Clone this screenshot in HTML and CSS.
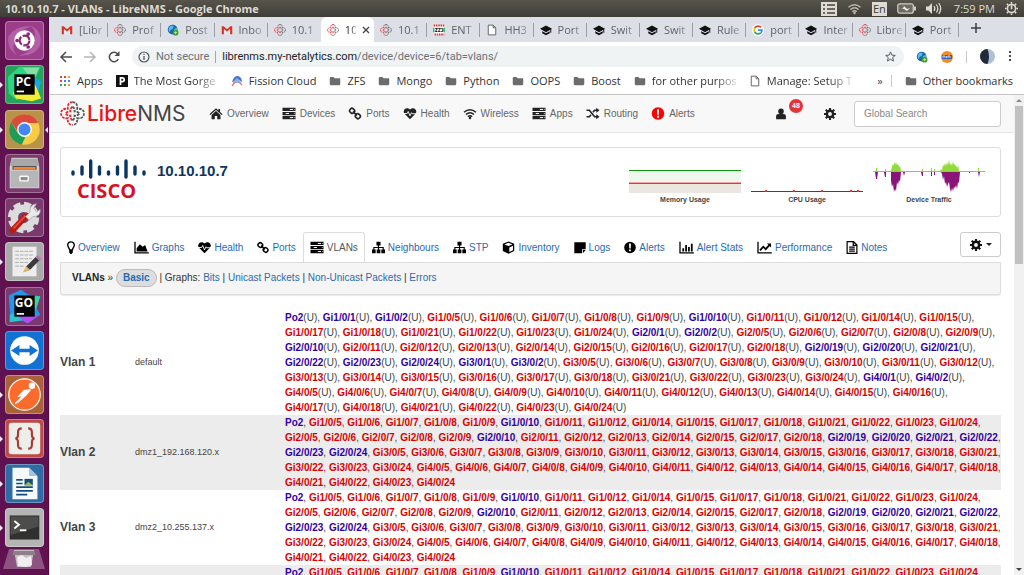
FILE: index.html
```html
<!DOCTYPE html>
<html lang="en">
<head>
<meta charset="utf-8">
<title>10.10.10.7 - VLANs - LibreNMS</title>
<link rel="stylesheet" href="styles.css">
</head>
<body>
<svg class="defs" aria-hidden="true">
  <symbol id="nms" viewBox="0 0 24 24"><g fill="none" stroke-width="1.7" stroke-dasharray="2.6 1">
    <g stroke="#e8252b"><path d="M12 1C9 1 7 3 7.500 7.500C3 7 1 9 1 12S3 17 7.500 16.500C7 21 9 23 12 23"/><path d="M12 5.500C9.500 7 10 10 10 10C7 9.500 5.500 12 5.500 12S7 14.500 10 14C9.500 17 12 18.500 12 18.500"/></g>
    <g class="nms-dark"><path d="M12 1C15 1 17 3 16.500 7.500C21 7 23 9 23 12S21 17 16.500 16.500C17 21 15 23 12 23"/><path d="M12 5.500C14.500 7 14 10 14 10C17 9.500 18.500 12 18.500 12S17 14.500 14 14C14.500 17 12 18.500 12 18.500"/></g></g></symbol>
  <symbol id="gmail" viewBox="0 0 16 16"><path d="M1 3h2.500L8 7l4.500-4H15v10.500h-2.800V6.500L8 10.200 3.800 6.500v7H1z" fill="#d93025"/><path d="M4 6.800l4 3.600 4-3.600v6.700H4z" fill="#eee" opacity=".5"/></symbol>
  <symbol id="globe" viewBox="0 0 16 16"><circle cx="7.500" cy="7.500" r="6.500" fill="#1667ad"/><path d="M3 4l3-2 3 1-1 3-3 2-2 3-1-3zM9 7l4-2 .5 3-3 3z" fill="#5cb8ee"/><circle cx="11.500" cy="11.500" r="3.800" fill="#3da02b"/><path d="M11.500 9.500v4M9.500 11.500h4" stroke="#d6f3b2"/></symbol>
  <symbol id="cap" viewBox="0 0 16 16"><path d="M8 2l8 4.400-1 .6v4.500h-1.300V7.800L8 11 0 6.400z"/><path d="M3 9.500l5 2.800 5-2.800v2.700L8 15l-5-2.800z"/></symbol>
  <symbol id="doc" viewBox="0 0 16 16"><path d="M3 1.500h6.500L13 5v9.500H3zM9.500 1.500V5H13" fill="#fff" stroke="#5f6368" stroke-width="1.300"/></symbol>
  <symbol id="folder" viewBox="0 0 16 16"><path d="M1 4q0-1.500 1.500-1.500H6l1.500 1.700H14q1 0 1 1V12q0 1.500-1.500 1.500h-11Q1 13.500 1 12z" fill="#6b6c6e"/></symbol>
  <symbol id="google" viewBox="0 0 16 16"><circle cx="8" cy="8" r="8" fill="#fff"/><g fill="none" stroke-width="2.300"><path d="M12 4.500A5.200 5.200 0 0 0 3.500 5.500" stroke="#ea4335"/><path d="M3.500 5.500a5.200 5.200 0 0 0 0 5" stroke="#fbbc05"/><path d="M3.500 10.500A5.200 5.200 0 0 0 11.600 11.900" stroke="#34a853"/><path d="M11.600 11.900A5 5 0 0 0 13.200 8.200H8" stroke="#4285f4"/></g></symbol>
  <symbol id="ent" viewBox="0 0 16 16"><path d="M1 1h14v14H1z" fill="#fff"/><path d="M1 2h14M2 14h13" stroke="#e02c22" stroke-width="2.500" stroke-dasharray="2 1"/><path d="M1 5v6M15 5v6" stroke="#35b77b" stroke-width="2"/><path d="M3 6h3l-3 4h3M7 6h3L7 10h3M11 6h2v4h-2" fill="none" stroke="#222" stroke-width="1.300"/></symbol>
  <symbol id="home" viewBox="0 0 16 16"><path d="M8 1.500l3 2.700V2.500h2V6l3 2.700-1 1L8 3.800 1 9.700l-1-1z"/><path d="M8 5l5.500 4.700V15H9.500v-4h-3v4h-4V9.700z"/></symbol>
  <symbol id="server" viewBox="0 0 16 16"><path d="M0 1h16v4H0zM0 6h16v4H0zM0 11h16v4H0z"/><path d="M9 3h4M4 8h4M9 13h4" stroke="#fff" stroke-width="1.200"/><path d="M14 3h1M14 8h1M14 13h1" stroke="#fff"/></symbol>
  <symbol id="link" viewBox="0 0 16 16"><g fill="none" stroke="currentColor" stroke-width="2"><rect x="1.500" y="2" width="6" height="5.500" rx="2.300" transform="rotate(42 4.500 4.700)"/><rect x="8.500" y="8.500" width="6" height="5.500" rx="2.300" transform="rotate(42 11.500 11.200)"/><path d="M5.500 5.500l5 5"/></g></symbol>
  <symbol id="heart" viewBox="0 0 16 16"><path d="M8 15L1.300 8.400C-2 4.500 3-1.500 8 3c5-4.500 10 1.500 6.700 5.400z"/><path d="M0 8h4.500l1.300-2.500L8 11l1.800-4 .8 1.300H16" fill="none" stroke="#fff" stroke-width="1.100"/></symbol>
  <symbol id="wifi" viewBox="0 0 16 16"><g fill="none" stroke="currentColor" stroke-width="1.800"><path d="M.6 6.500q7.400-6.500 14.800 0M3 9.300q5-4.400 10 0M5.400 11.900q2.600-2.200 5.200 0"/></g><circle cx="8" cy="13.500" r="1.500"/></symbol>
  <symbol id="shuffle" viewBox="0 0 16 16"><path d="M0 4h3.500l6.500 8h3M0 12h3.500L5.500 9.600M8 6.400L10 4h3" fill="none" stroke="currentColor" stroke-width="2"/><path d="M12 .8L16 4l-4 3.200zM12 8.800l4 3.200-4 3.200z"/></symbol>
  <symbol id="alert" viewBox="0 0 16 16"><circle cx="8" cy="8" r="7.700"/><path d="M6.700 2.800h2.600L9 9.400H7zM6.800 10.800h2.400v2.300H6.800z" fill="#fff"/></symbol>
  <symbol id="user" viewBox="0 0 16 16"><circle cx="8" cy="4.500" r="3.700"/><path d="M1.500 15V11q0-3 3.500-3h6q3.500 0 3.500 3v4z"/></symbol>
  <symbol id="gear" viewBox="0 0 16 16"><circle cx="8" cy="8" r="4.200" fill="none" stroke="currentColor" stroke-width="3.300"/><path d="M8 0v3.500M8 12.500V16M0 8h3.500M12.500 8H16M2.300 2.300l2.500 2.500M11.200 11.200l2.500 2.500M2.300 13.700l2.500-2.500M11.200 4.800l2.500-2.500" stroke="currentColor" stroke-width="2.800"/></symbol>
  <symbol id="bulb" viewBox="0 0 10 16"><path d="M3.200 11C3.200 9 .9 7.800.9 5a4.100 4.100 0 0 1 8.200 0c0 2.800-2.300 4-2.300 6z" fill="none" stroke="currentColor" stroke-width="1.700"/><path d="M2.800 11h4.400v3.300L5.800 16H4.200l-1.400-1.700z"/></symbol>
  <symbol id="area" viewBox="0 0 18 16"><path d="M1 1v13.500h17" fill="none" stroke="currentColor" stroke-width="1.600"/><path d="M3 13V9l4-5 3.500 3L13.500 5 16.500 13z"/></symbol>
  <symbol id="tree" viewBox="0 0 16 16"><path d="M5.500 1h5v4.500h-5zM0 10.500h4.500V15H0zM5.800 10.500h4.500V15H5.800zM11.500 10.500H16V15h-4.500z"/><path d="M8 5v6M2.300 11V8h11.500v3" fill="none" stroke="currentColor" stroke-width="1.400"/></symbol>
  <symbol id="cube" viewBox="0 0 16 16"><path d="M8 .5l7 3v8.700l-7 3.500-7-3.500V3.500z"/><path d="M3 4.200L8 2.200l5 2-5 2zM9 8l4.500-2.200v5.500L9 13.500z" fill="#fff"/></symbol>
  <symbol id="note" viewBox="0 0 14 16"><path d="M0 1.500h14v8.700H9.500V15H0z"/><path d="M10.500 11.200H14L10.500 15z"/></symbol>
  <symbol id="bars" viewBox="0 0 18 16"><path d="M1 1v13.500h17" fill="none" stroke="currentColor" stroke-width="1.600"/><path d="M5 13V9M8.500 13V5M12 13V7.500M15.500 13V3.500" stroke="currentColor" stroke-width="2.200"/></symbol>
  <symbol id="line" viewBox="0 0 18 16"><path d="M1 1v13.500h17" fill="none" stroke="currentColor" stroke-width="1.600"/><path d="M3.500 11.500L7.500 7l3 3L15 5" fill="none" stroke="currentColor" stroke-width="2.200"/><path d="M12 3h5v5z"/></symbol>
  <symbol id="file" viewBox="0 0 14 16"><path d="M1 .9h8L13 5v10.200H1zM8.500 1v4.500H13M3.500 7.500h7M3.500 10h7M3.500 12.500h7" fill="none" stroke="currentColor" stroke-width="1.500"/></symbol>
</svg>

<header class="panel-bar">
  <span class="win-title">10.10.10.7 - VLANs - LibreNMS - Google Chrome</span>
  <div class="indicators">
    <svg width="16" height="14" viewBox="0 0 16 14"><path d="M0 0h16v14H0z" fill="#dfdbd2"/><path d="M2 3h2M6 3h8M2 7h2M6 7h8M2 11h2M6 11h8" stroke="#45433d" stroke-width="1.600"/></svg>
    <svg class="wifi-ind" width="15" height="13"><use href="#wifi"/></svg>
    <span class="lang">En</span>
    <svg width="19" height="11" viewBox="0 0 19 11"><rect x=".8" y=".8" width="15.500" height="9.400" rx="2" fill="#6d6a62" stroke="#cfcbc2" stroke-width="1.300"/><path d="M17 3.500h2v4h-2z" fill="#cfcbc2"/><path d="M3 5.500h3l1-2.500 3 3 3-1-3 3-3-2z" fill="#eee"/></svg>
    <svg width="16" height="13" viewBox="0 0 16 13"><path d="M0 4.500h2.500L6 1v11L2.500 8.500H0z" fill="#dfdbd2"/><path d="M8 4q1.700 2.500 0 5M10.300 2.500q3 4 0 8M12.700 1q4 5.500 0 11" fill="none" stroke="#dfdbd2" stroke-width="1.200"/></svg>
    <span class="clock">7:59 PM</span>
    <svg width="13" height="13" viewBox="0 0 16 16"><circle cx="8" cy="8" r="5" fill="none" stroke="#dfdbd2" stroke-width="2"/><path d="M8 4v5M8 0v2M8 14v2M0 8h2M14 8h2M2.300 2.300l1.500 1.500M12.200 12.200l1.500 1.500M2.300 13.700l1.500-1.500M12.200 3.800l1.500-1.500" stroke="#dfdbd2" stroke-width="2"/></svg>
  </div>
</header>

<div class="desktop">
<nav class="dock" aria-label="Launcher">
  <ul class="tiles">
    <li class="tile t-dash"><svg viewBox="0 0 40 40"><path d="M3 15Q12 3 28 5Q12 8 10 20Q5 30 12 36Q0 28 3 15zM37 25Q30 38 14 36Q30 32 31 20Q33 10 27 4Q40 10 37 25z" fill="#c77bbd" opacity=".55"/><circle cx="20" cy="20" r="11" fill="#fff"/><circle cx="20" cy="20" r="5.300" fill="none" stroke="#8a2a77" stroke-width="2.400" stroke-dasharray="9.500 1.600"/><circle cx="12" cy="20" r="2" fill="#8a2a77"/><circle cx="24" cy="13" r="2" fill="#8a2a77"/><circle cx="24" cy="27" r="2" fill="#8a2a77"/></svg></li>
    <li class="tile t-pc run"><svg viewBox="0 0 40 40"><path d="M2 12L14 1h23l-6 15L12 37 3 30z" fill="#2ed582"/><path d="M18 2h18l-7 14z" fill="#85e0a8"/><path d="M31 12l7 5-3 10-6 2z" fill="#18a8e8"/><path d="M7 29l24-10 7 16-10 3-17-3z" fill="#f5ee34"/><path d="M9 9h22v22H9z" fill="#050505"/><path d="M11.500 27.500h8" stroke="#fff" stroke-width="1.800"/><text x="10.500" y="21.500" class="tile-text">PC</text></svg></li>
    <li class="tile t-chrome run focus"><svg viewBox="0 0 40 40"><circle cx="20" cy="20" r="16.500" fill="#f8cc45"/><path d="M20 3.500A16.500 16.500 0 0 1 35 13H20l-7 10L5.500 12A16.500 16.500 0 0 1 20 3.500z" fill="#dc4a3c"/><path d="M5.500 12L13 24l8 4-4 8.400A16.500 16.500 0 0 1 5.500 12z" fill="#1f9d58"/><circle cx="20" cy="20" r="8" fill="#fff"/><circle cx="20" cy="20" r="6.500" fill="#4486f4"/></svg></li>
    <li class="tile t-plain"><svg viewBox="0 0 40 40"><path d="M6 3h28l2 10v23H4V13z" fill="#cfcfcf"/><path d="M6 4h28l1 8H5z" fill="#a8a8a8"/><path d="M7 12h26v4H7z" fill="#4b443f"/><path d="M8 13h24v3H8z" fill="#f0843a"/><path d="M5 17h30v18H5z" fill="#b6b6b6"/><rect x="15" y="23" width="9" height="5" rx="1" fill="#8d8d8d" stroke="#fff" stroke-width="1.500"/></svg></li>
    <li class="tile t-plain"><svg viewBox="0 0 40 40"><circle cx="19" cy="20" r="10" fill="none" stroke="#dcdcdc" stroke-width="8"/><circle cx="19" cy="20" r="15" fill="none" stroke="#dcdcdc" stroke-width="4" stroke-dasharray="7.800 4"/><path d="M7 34L22 18" stroke="#b81d12" stroke-width="6.500" stroke-linecap="round"/><path d="M8 32l13-14" stroke="#e9493a" stroke-width="2"/><path d="M21 19l5-5q-1-8 7-9l-3 5 3 4 4-3q1 8-8 8l-4 4z" fill="#e9e9e9" stroke="#999" stroke-width=".7"/></svg></li>
    <li class="tile t-gray run"><svg viewBox="0 0 40 40"><path d="M7 4h26v32H7z" fill="#ededed"/><path d="M10 9h20M10 13h20M10 17h18M10 21h14M10 25h10" stroke="#aaa" stroke-width="1" stroke-dasharray="4 1"/><path d="M22 25L32 15l4 4-10 10-6 2z" fill="#3b3b3b"/><path d="M32 15l2-2 4 4-2 2z" fill="#b879b5"/><path d="M22 25l4 4-8 3z" fill="#e4b56a"/></svg></li>
    <li class="tile t-plain"><svg viewBox="0 0 40 40"><path d="M3 8l13-6 8 5 13 2-4 13 4 7-14 9-9-5-9 3z" fill="#2398e6"/><path d="M27 9l10 0-5 15z" fill="#3bd69b"/><path d="M8 30l16 8 12-9z" fill="#b74af7"/><path d="M4 29l6-2 8 8-14 2z" fill="#2bc5cf"/><path d="M9 8h22v23H9z" fill="#050505"/><path d="M11.500 28h8" stroke="#fff" stroke-width="1.800"/><text x="9.500" y="20.500" class="tile-text">GO</text></svg></li>
    <li class="tile t-team"><svg viewBox="0 0 40 40"><circle cx="20" cy="20" r="15.500" fill="#fff"/><path d="M5.500 20l9-6v4h11v-4l9 6-9 6v-4h-11v4z" fill="#1272d4"/></svg></li>
    <li class="tile t-post run"><svg viewBox="0 0 40 40"><circle cx="20" cy="20" r="17" fill="#fb6b2c" stroke="#fff" stroke-width="1.300"/><circle cx="28" cy="10.500" r="3.500" fill="#fff"/><path d="M26 14l-7 1-7 8 5-1-5 8 10-9 5-6" fill="#fff"/><path d="M18 22l-8 8" stroke="#fff" stroke-width="1.500"/></svg></li>
    <li class="tile t-brace run"><svg viewBox="0 0 40 40"><rect x="3" y="3" width="34" height="34" rx="3" fill="#ededea"/><path d="M17 9q-4 0-4 4v3q0 4-3 4 3 0 3 4v3q0 4 4 4M24 9q4 0 4 4v3q0 4 3 4-3 0-3 4v3q0 4-4 4" fill="none" stroke="#a93a32" stroke-width="2.300"/></svg></li>
    <li class="tile t-writer run"><svg viewBox="0 0 40 40"><path d="M7 3h18l9 9v25H7z" fill="#f5f9fc"/><path d="M25 3v9h9z" fill="#9fc2de"/><path d="M11 16h7M11 20h7M11 24h18M11 28h18M11 32h12" stroke="#174d7c" stroke-width="1.800"/><path d="M20 15h9v7h-9z" fill="#174d7c"/><path d="M20 22l4-4 5 4z" fill="#93bb4f"/></svg></li>
    <li class="tile t-term run"><svg viewBox="0 0 40 40"><path d="M4 7h32v26H4z" fill="#30302f"/><path d="M5 8h30v11L5 28z" fill="#4d4d4b"/><path d="M9 13l5 4-5 4" fill="none" stroke="#fff" stroke-width="2"/><path d="M15 23h7" stroke="#fff" stroke-width="2"/></svg></li>
  </ul>
  <svg class="trash" viewBox="0 0 42 22"><path d="M6 0h30l6 20H0z" fill="#8d5481"/><path d="M11 1h20l-3 17H14z" fill="#c9bcc6"/><path d="M10 2h22v4H10z" fill="#8d8089"/><path d="M14 8l5-2 4 3 5-2 1 9-6 2-8-1z" fill="#f1eef0"/></svg>
</nav>

<main class="browser">
  <div class="tabstrip">
    <div class="tabs">
      <button class="tab"><svg class="fav"><use href="#gmail"/></svg><span>[Libr</span></button>
      <button class="tab"><svg class="fav"><use href="#nms"/></svg><span>Prof</span></button>
      <button class="tab"><svg class="fav"><use href="#globe"/></svg><span>Post</span></button>
      <button class="tab"><svg class="fav"><use href="#gmail"/></svg><span>Inbo</span></button>
      <button class="tab plain"><svg class="fav"><use href="#nms"/></svg><span>10.1</span></button>
      <button class="tab active"><svg class="fav"><use href="#nms"/></svg><span>10</span><svg class="close" viewBox="0 0 8 8"><path d="M1 1l6 6M7 1L1 7" stroke="#45484c" stroke-width="1.400"/></svg></button>
      <button class="tab"><svg class="fav"><use href="#nms"/></svg><span>10.1</span></button>
      <button class="tab"><svg class="fav"><use href="#ent"/></svg><span>ENT</span></button>
      <button class="tab"><svg class="fav"><use href="#doc"/></svg><span>HH3</span></button>
      <button class="tab"><svg class="fav"><use href="#cap"/></svg><span>Port</span></button>
      <button class="tab"><svg class="fav"><use href="#cap"/></svg><span>Swit</span></button>
      <button class="tab"><svg class="fav"><use href="#cap"/></svg><span>Swit</span></button>
      <button class="tab"><svg class="fav"><use href="#cap"/></svg><span>Rule</span></button>
      <button class="tab"><svg class="fav"><use href="#google"/></svg><span>port</span></button>
      <button class="tab"><svg class="fav"><use href="#cap"/></svg><span>Inter</span></button>
      <button class="tab"><svg class="fav"><use href="#nms"/></svg><span>Libre</span></button>
      <button class="tab"><svg class="fav"><use href="#cap"/></svg><span>Port</span></button>
    </div>
    <button class="newtab" aria-label="New tab"><svg width="10" height="10" viewBox="0 0 10 10"><path d="M5 0v10M0 5h10" stroke="#3c4043" stroke-width="1.500"/></svg></button>
  </div>

  <div class="toolbar">
    <button class="tool" aria-label="Back"><svg viewBox="0 0 12 12"><path d="M12 6H1.500M6 1L1 6l5 5" fill="none" stroke="#4a4d51" stroke-width="1.500"/></svg></button>
    <button class="tool" aria-label="Forward"><svg viewBox="0 0 12 12"><path d="M0 6h10.500M6 1l5 5-5 5" fill="none" stroke="#b4b6b8" stroke-width="1.500"/></svg></button>
    <button class="tool" aria-label="Reload"><svg viewBox="0 0 12 12"><path d="M10.300 8A4.700 4.700 0 1 1 9.500 2.800L10.500 4" fill="none" stroke="#4a4d51" stroke-width="1.500"/><path d="M11.500 0v5h-5z" fill="#4a4d51"/></svg></button>
    <div class="omnibox">
      <svg width="12" height="12" viewBox="0 0 12 12"><circle cx="6" cy="6" r="5" fill="none" stroke="#55585c" stroke-width="1.200"/><path d="M6 5v4M6 2.800v1.300" stroke="#55585c" stroke-width="1.300"/></svg>
      <span class="insecure">Not secure</span>
      <span class="url"><b>librenms.my-netalytics.com</b>/device/device=6/tab=vlans/</span>
      <svg class="star" width="11" height="11" viewBox="0 0 12 12"><path d="M6 1l1.500 3.500 3.700.3-2.800 2.400.9 3.700L6 9l-3.300 1.900.9-3.700L.8 4.800l3.700-.3z" fill="none" stroke="#4a4d51"/></svg>
    </div>
    <div class="extensions">
      <svg width="12" height="12"><use href="#globe"/></svg>
      <svg width="12" height="12" viewBox="0 0 12 12"><circle cx="6" cy="6" r="6" fill="#ee8e27"/><path d="M1 4h10v4H1z" fill="#3f5dae"/><path d="M2 7V5h2v2M5.500 5v2M7 7V5h2v2" fill="none" stroke="#e8e8f0" stroke-width=".8"/></svg>
      <i class="rule"></i>
      <svg width="15" height="15" viewBox="0 0 15 15"><circle cx="7.500" cy="7.500" r="7.500" fill="#aebfd6"/><path d="M7.500 0a7.500 7.500 0 0 0 0 15q3-7 0-15z" fill="#22293a"/></svg>
      <svg width="4" height="11" viewBox="0 0 4 11"><path d="M1 0h2v2H1zM1 4h2v2H1zM1 8h2v2H1z" fill="#45484c"/></svg>
    </div>
  </div>

  <nav class="bookmarks" aria-label="Bookmarks">
    <a href="#"><svg class="fav" viewBox="0 0 12 12"><path d="M1 1h2v2H1zM5 1h2v2H5zM1 5h2v2H1z" fill="#ea4335"/><path d="M9 1h2v2H9zM9 9h2v2H9z" fill="#f2a12b"/><path d="M5 5h2v2H5zM9 5h2v2H9z" fill="#4285f4"/><path d="M1 9h2v2H1zM5 9h2v2H5z" fill="#34a853"/></svg><span>Apps</span></a>
    <a href="#"><svg class="fav" viewBox="0 0 12 12"><path d="M0 0h12v12H0z" fill="#111"/><path d="M4.500 10V2.800h1.700q2 0 2 1.900t-2 1.900H4.500" fill="none" stroke="#fff" stroke-width="1.700"/></svg><span class="fade">The Most Gorge</span></a>
    <a href="#"><svg class="fav" viewBox="0 0 12 12"><path d="M1 7Q3 0 7 1t4 6L8 5z" fill="#4a78cc"/><path d="M2 7l4-4 4 4v1H2z" fill="#8fb1e8"/><path d="M1 11l3-4M11 10L8 7" stroke="#e08376" stroke-width="1.500"/></svg><span>Fission Cloud</span></a>
    <a href="#"><svg class="fav"><use href="#folder"/></svg><span>ZFS</span></a>
    <a href="#"><svg class="fav"><use href="#folder"/></svg><span>Mongo</span></a>
    <a href="#"><svg class="fav"><use href="#folder"/></svg><span>Python</span></a>
    <a href="#"><svg class="fav"><use href="#folder"/></svg><span>OOPS</span></a>
    <a href="#"><svg class="fav"><use href="#folder"/></svg><span>Boost</span></a>
    <a href="#"><svg class="fav"><use href="#folder"/></svg><span class="fade">for other purpos</span></a>
    <a href="#"><svg class="fav"><use href="#doc"/></svg><span class="fade">Manage: Setup T</span></a>
    <button class="more">»</button>
    <a href="#"><svg class="fav"><use href="#folder"/></svg><span>Other bookmarks</span></a>
  </nav>

  <div class="viewport">
  <div class="page">
    <nav class="navbar" aria-label="LibreNMS">
      <a class="brand" href="#"><svg width="25" height="25"><use href="#nms"/></svg><span><b>Libre</b>NMS</span></a>
      <ul class="menu">
        <li><a href="#"><svg><use href="#home"/></svg>Overview</a></li>
        <li><a href="#"><svg><use href="#server"/></svg>Devices</a></li>
        <li><a href="#"><svg><use href="#link"/></svg>Ports</a></li>
        <li><a href="#"><svg><use href="#heart"/></svg>Health</a></li>
        <li><a href="#"><svg><use href="#wifi"/></svg>Wireless</a></li>
        <li><a href="#"><svg><use href="#server"/></svg>Apps</a></li>
        <li><a href="#"><svg><use href="#shuffle"/></svg>Routing</a></li>
        <li><a href="#"><svg class="red"><use href="#alert"/></svg>Alerts</a></li>
      </ul>
      <div class="account">
        <a class="user" href="#" aria-label="User"><svg width="12" height="12"><use href="#user"/></svg><span class="badge">48</span></a>
        <a href="#" aria-label="Settings"><svg width="12" height="12"><use href="#gear"/></svg></a>
        <input class="search" type="search" placeholder="Global Search" aria-label="Global Search">
      </div>
    </nav>

    <div class="content">
      <section class="device">
        <svg class="cisco" width="78" height="42" viewBox="0 0 78 42"><g stroke="#0d3563" stroke-width="3.400" stroke-linecap="round"><path d="M2 14v2M11 9v7M19.700 3v16M28.500 9v7M37.500 14v2M46.500 9v7M55 3v16M64 9v7M73 14v2"/></g><text x="6" y="40" class="cisco-text">CISCO</text></svg>
        <a class="hostname" href="#">10.10.10.7</a>
        <div class="graphs">
          <figure><svg width="112" height="36" viewBox="0 0 112 36"><path d="M0 11h112v12H0z" fill="#eef8ee"/><path d="M0 24h112v9H0z" fill="#ebe6df"/><path d="M0 22.500h112" stroke="#f5a3a3"/><path d="M0 10.500h112" stroke="#0c9a0c"/><path d="M0 23.500h112" stroke="#d83a3a"/></svg><figcaption>Memory Usage</figcaption></figure>
          <figure><svg width="112" height="36" viewBox="0 0 112 36"><path d="M0 31.500h14l1-1 1 1h26l1-1 1 1h26l1-1 1 1h27l1-1 1 1h5l1-1 1 1h4" fill="none" stroke="#cc0909" stroke-width="1.200"/></svg><figcaption>CPU Usage</figcaption></figure>
          <figure><svg width="112" height="36" viewBox="0 0 112 36"><path d="M0 11.500h112" stroke="#aaa"/><path d="M3 11V8h1v3M12 11V9h1v2M18 11l1-5 1-2 1 2V1l1 4 1-3 1 3 1-1 1 3 1-1 1 5zM49 11V9h1v2M58 11V8h1v3M61 11V9h1v2M67 11l1-2 1 1 1-5 1 1 1-3 1 3 1-4 1 3 1-5 1 5 1-2 1 3 1-5 1 4 1-1 1 3 1-1 1 2v-3l1 6zM105 11V8h1v3" fill="#8fdc3b"/><path d="M2 12h3l-1 7H3zM11 12h2v5h-1zM18 12h10l-1 10-1-2-1 5-1-3-1 9-1-2-1 3-1-8-1 3-1-6zM30 12h2l-1 4zM48 12h2v4h-1zM58 12h1v4h-1zM61 12h1v3h-1zM67 12h20l-1 11-1-1-1 7-1-4-1 3-1-1-1 4-1-3-1 4-1-3-1-7-1 2-1 3-1-5-1 2-1-8-1 4-1-6-1-2zM96 12h1v1h-1zM105 12h2l-1 5z" fill="#8a1477"/></svg><figcaption>Device Traffic</figcaption></figure>
        </div>
      </section>

      <div class="tabrow">
        <ul class="devtabs">
          <li><a href="#"><svg width="8" height="13"><use href="#bulb"/></svg>Overview</a></li>
          <li><a href="#"><svg width="15" height="13"><use href="#area"/></svg>Graphs</a></li>
          <li><a href="#"><svg width="13" height="13"><use href="#heart"/></svg>Health</a></li>
          <li><a href="#"><svg width="12" height="13"><use href="#link"/></svg>Ports</a></li>
          <li class="on"><a href="#"><svg width="14" height="13"><use href="#server"/></svg>VLANs</a></li>
          <li><a href="#"><svg width="13" height="13"><use href="#tree"/></svg>Neighbours</a></li>
          <li><a href="#"><svg width="13" height="13"><use href="#tree"/></svg>STP</a></li>
          <li><a href="#"><svg width="13" height="13"><use href="#cube"/></svg>Inventory</a></li>
          <li><a href="#"><svg width="12" height="13"><use href="#note"/></svg>Logs</a></li>
          <li><a href="#"><svg width="12" height="13"><use href="#alert"/></svg>Alerts</a></li>
          <li><a href="#"><svg width="15" height="13"><use href="#bars"/></svg>Alert Stats</a></li>
          <li><a href="#"><svg width="15" height="13"><use href="#line"/></svg>Performance</a></li>
          <li><a href="#"><svg width="12" height="13"><use href="#file"/></svg>Notes</a></li>
        </ul>
        <button class="options" aria-label="Device options"><svg width="12" height="12"><use href="#gear"/></svg><i class="caret"></i></button>
      </div>

      <div class="subnav"><b>VLANs</b> » <a class="pill" href="#">Basic</a> | Graphs: <a href="#">Bits</a> | <a href="#">Unicast Packets</a> | <a href="#">Non-Unicast Packets</a> | <a href="#">Errors</a></div>

      <table class="vlans">
        <colgroup><col class="c-id"><col class="c-name"><col></colgroup>
        <tbody id="vlan-rows"></tbody>
      </table>
    </div>
  </div>
  <div class="scrollbar"><i class="up"></i><div class="thumb"></div><i class="down"></i></div>
  </div>
</main>
</div>
<script src="vlans.js"></script>
</body>
</html>
```
FILE: styles.css
```css
* { box-sizing: border-box; }
html, body { height: 100%; }
body { margin: 0; display: flex; flex-direction: column; overflow: hidden; background: #fff; color: #444; font: 10px/15px "Liberation Sans", Arial, sans-serif; }
ul { list-style: none; margin: 0; padding: 0; }
svg { flex: none; fill: currentColor; overflow: visible; }
button { border: 0; padding: 0; background: none; font: inherit; color: inherit; }
a { color: #2a6ab2; text-decoration: none; }
.defs { position: absolute; width: 0; height: 0; }
.nms-dark { stroke: #555; }

/* desktop top panel */
.panel-bar { flex: none; height: 17px; display: flex; align-items: center; justify-content: space-between; padding: 0 6px 0 5px; background: linear-gradient(#57544b, #3e3d38); color: #dfdbd2; font-family: "Open Sans", sans-serif; }
.win-title { font-size: 11px; font-weight: 700; }
.indicators { display: flex; align-items: center; gap: 10px; font-size: 11px; }
.wifi-ind { color: #bdb9b0; }
.lang { background: #dfdbd2; color: #3c3b37; font-size: 11px; line-height: 14px; padding: 0 1px; }
.clock { margin-left: 2px; }

.desktop { flex: 1; min-height: 0; display: flex; }

/* launcher */
.dock { flex: none; width: 49px; padding: 4px 0 0; display: flex; flex-direction: column; align-items: center; background: #5f1150; border-right: 1px solid #4d0a41; }
.tiles { flex: 1; min-height: 0; display: flex; flex-direction: column; justify-content: space-between; }
.tile { position: relative; width: 39px; height: 39px; border-radius: 4px; border: 1px solid rgba(255,255,255,.3); }
.tile svg { display: block; width: 100%; height: 100%; }
.tile-text { font: 700 13px "Open Sans", sans-serif; fill: #fff; }
.tile.run::before { content: ""; position: absolute; left: -6px; top: 16px; border: 3px solid transparent; border-left-color: #eee; border-right-width: 0; }
.tile.focus::after { content: ""; position: absolute; right: -5px; top: 16px; border: 3px solid transparent; border-right-color: #eee; border-left-width: 0; }
.t-dash { background: #9c3f8b; }
.t-pc { background: #26a35c; }
.t-chrome { background: #b8934a; }
.t-plain { background: #7b3a6d; }
.t-gray { background: #a9a9a9; }
.t-team { background: #1272d4; }
.t-post { background: #a9623a; }
.t-brace { background: #bb4a49; }
.t-writer { background: #2f6ba5; }
.t-term { background: #b5b5b5; }
.trash { width: 42px; height: 22px; margin: 2px 0 4px; }

/* browser chrome */
.browser { flex: 1; min-width: 0; display: flex; flex-direction: column; border-left: 1px solid #ddd; }
.tabstrip { flex: none; height: 25px; display: flex; padding: 0 37px 0 5px; background: #dcdfe6; }
.tabs { flex: 1; display: flex; min-width: 0; }
.tab { flex: 1 1 0; min-width: 0; display: flex; align-items: center; gap: 6px; padding: 0 4px 0 6px; position: relative; color: #5f6368; font: 11px "Open Sans", sans-serif; }
.tab:not(.active):not(.plain)::after { content: ""; position: absolute; right: 0; top: 6px; height: 14px; border-right: 1px solid #9a9da3; }
.tab span { flex: 1; min-width: 0; overflow: hidden; white-space: nowrap; text-align: left; -webkit-mask-image: linear-gradient(90deg, #000 55%, rgba(0,0,0,.3)); mask-image: linear-gradient(90deg, #000 55%, rgba(0,0,0,.3)); }
.tab.active { background: #fff; color: #333; border-radius: 6px 6px 0 0; }
.fav { flex: none; width: 12px; height: 12px; color: #111; }
.close { width: 8px; height: 8px; }
.newtab { width: 22px; margin-left: 6px; }
.toolbar { flex: none; height: 29px; display: flex; align-items: center; gap: 12px; padding: 0 12px 0 10px; }
.tool { width: 12px; height: 12px; display: flex; }
.tool svg { width: 12px; height: 12px; }
.omnibox { flex: 1; height: 21px; display: flex; align-items: center; border-radius: 11px; background: #f0f3f4; padding: 0 8px 0 6px; font: 11px Roboto, sans-serif; color: #6c7074; }
.insecure { margin-left: 6px; padding-right: 6px; border-right: 1px solid #a5a8ab; line-height: 12px; }
.url { margin-left: 6px; }
.url b { font-weight: 400; color: #202124; }
.star { margin-left: auto; }
.extensions { display: flex; align-items: center; gap: 13px; }
.rule { height: 12px; border-right: 1px solid #c9cbce; }
.bookmarks { flex: none; height: 24px; display: flex; align-items: center; gap: 13px; padding: 0 11px 4px 9px; border-bottom: 1px solid #c4c4c4; font: 11px "Open Sans", sans-serif; white-space: nowrap; }
.bookmarks a { display: flex; align-items: center; gap: 6px; color: #303235; }
.fade { width: 84px; overflow: hidden; -webkit-mask-image: linear-gradient(90deg, #000 75%, rgba(0,0,0,.2)); mask-image: linear-gradient(90deg, #000 75%, rgba(0,0,0,.2)); }
.more { margin-left: auto; padding-right: 8px; line-height: 12px; border-right: 1px solid #ccc; }

.viewport { flex: 1; min-height: 0; display: flex; }
.page { flex: 1; min-width: 0; overflow: hidden; }
.scrollbar { flex: none; width: 10px; display: flex; flex-direction: column; align-items: center; justify-content: space-between; padding: 4px 0; background: #f1f1f1; }
.thumb { width: 8px; height: 158px; margin: 4px 0 auto; background: #c1c1c1; }
.up, .down { border: 3px solid transparent; }
.up { border-bottom-color: #888; border-top-width: 0; }
.down { border-top-color: #444; border-bottom-width: 0; }

/* application navbar */
.navbar { height: 38px; display: flex; align-items: center; padding: 0 13px 0 10px; background: #f8f8f8; border-bottom: 1px solid #e7e7e7; }
.brand { display: flex; align-items: center; gap: 2px; color: #444; font: 400 22px/25px Inter, sans-serif; width: 149px; }
.brand b { font-weight: 500; color: #ed1111; }
.brand span { white-space: nowrap; font-size: 21px; }
.menu { display: flex; gap: 13px; }
.menu a { display: flex; align-items: center; gap: 4px; color: #666; }
.menu svg { width: 14px; height: 13px; color: #222; }
.menu svg.red { color: #f00; }
.account { margin-left: auto; display: flex; align-items: center; }
.account a { display: flex; color: #222; margin-right: 18px; }
.account .user { position: relative; margin-right: 37px; }
.badge { position: absolute; left: 14px; top: -9px; width: 14px; height: 14px; border-radius: 7px; background: #e33437; color: #fff; font: 700 7px/14px "Liberation Sans", sans-serif; text-align: center; }
.search { width: 147px; height: 26px; border: 1px solid #ccc; border-radius: 3px; padding: 0 9px; background: #fff; font: 10px "Liberation Sans", sans-serif; color: #555; }
.search::placeholder { color: #888; opacity: 1; }

/* device */
.content { padding: 14px 13px 0 10px; }
.device { display: flex; align-items: flex-start; height: 70px; padding: 10px 15px 0 10px; border: 1px solid #ddd; border-radius: 3px; }
.cisco-text { font: 700 20px "Open Sans", sans-serif; fill: #d8101f; }
.hostname { margin: 4px 0 0 8px; color: #0d3563; font-size: 15px; line-height: 18px; font-weight: 700; }
.graphs { margin-left: auto; display: flex; gap: 10px; padding-top: 2px; }
.graphs figure { margin: 0; display: flex; flex-direction: column; align-items: center; }
.graphs figcaption { font-size: 7px; line-height: 8px; font-weight: 700; color: #444; }

.tabrow { display: flex; align-items: flex-start; justify-content: space-between; margin-top: 15px; }
.devtabs { display: flex; }
.devtabs a { display: flex; align-items: center; gap: 3px; height: 30px; padding: 0 6px; border: 1px solid transparent; border-bottom: 0; white-space: nowrap; }
.devtabs svg { color: #000; }
.devtabs .on a { border-color: #ddd; border-radius: 3px 3px 0 0; color: #555; background: #fff; }
.options { width: 41px; height: 25px; border: 1px solid #ccc; border-radius: 3px; display: flex; align-items: center; justify-content: center; gap: 4px; color: #111; background: #fff; }
.caret { border: 3px solid transparent; border-top-color: #222; border-bottom-width: 0; }
.subnav { padding: 6px 11px 7px; border: 1px solid #ddd; border-radius: 0 0 3px 3px; background: #f5f5f5; line-height: 18px; color: #333; box-shadow: 0 1px 1px rgba(0,0,0,.08); }
.subnav b { color: #222; }
.pill { display: inline-block; padding: 0 6px; line-height: 16px; border: 1px solid #bbb; border-radius: 9px; background: #ddd; font-weight: 700; }

.vlans { width: 100%; margin-top: 15px; border-collapse: collapse; table-layout: fixed; }
.vlans td, .vlans th { padding: 0; text-align: left; vertical-align: middle; }
.vlans tr:nth-child(even) { background: #ececec; }
.c-id { width: 75px; }
.c-name { width: 150px; }
.vlans th { font-size: 12px; font-weight: 700; }
.vlans .name { font-size: 9px; }
.vlans a { font-weight: 700; color: #d90000; }
.vlans a.idle { color: #3300a0; }
```
FILE: vlans.js
```js
// Ports of each stack member; "a-b" is an inclusive range.
const tagged = { 1: "5-12,14-15,17-18,21-24", 2: "5-15,17-24", 3: "5-18,21-24", 4: "5-18,21-24" };
const vlans = [
  { id: "Vlan 1", name: "default", untagged: true, ports: { 1: "1-2,5-12,14-15,17-18,21-24", 2: "1-2,5-24", 3: "1-2,5-18,21-24", 4: "1-2,5-18,21-24" } },
  { id: "Vlan 2", name: "dmz1_192.168.120.x", ports: tagged },
  { id: "Vlan 3", name: "dmz2_10.255.137.x", ports: tagged },
  { id: "", name: "", ports: { 1: tagged[1] } },
];

function expand(ranges) {
  return ranges.split(",").flatMap((r) => {
    const [a, b = a] = r.split("-").map(Number);
    return Array.from({ length: b - a + 1 }, (_, i) => a + i);
  });
}

function isIdle(member, port) {
  return port <= 2 || (port === 10 && member <= 2) || (member === 2 && port >= 19);
}

const body = document.getElementById("vlan-rows");
for (const vlan of vlans) {
  const suffix = vlan.untagged ? "(U)" : "";
  const cells = ['<a href="#" class="idle">Po2</a>' + suffix];
  for (const [member, ranges] of Object.entries(vlan.ports)) {
    for (const port of expand(ranges)) {
      const cls = isIdle(Number(member), port) ? ' class="idle"' : "";
      cells.push(`<a href="#"${cls}>Gi${member}/0/${port}</a>${suffix}`);
    }
  }
  const row = document.createElement("tr");
  row.innerHTML = `<th scope="row">${vlan.id}</th><td class="name">${vlan.name}</td><td>${cells.join(", ")}${vlan.id ? "" : ","}</td>`;
  body.append(row);
}
```
